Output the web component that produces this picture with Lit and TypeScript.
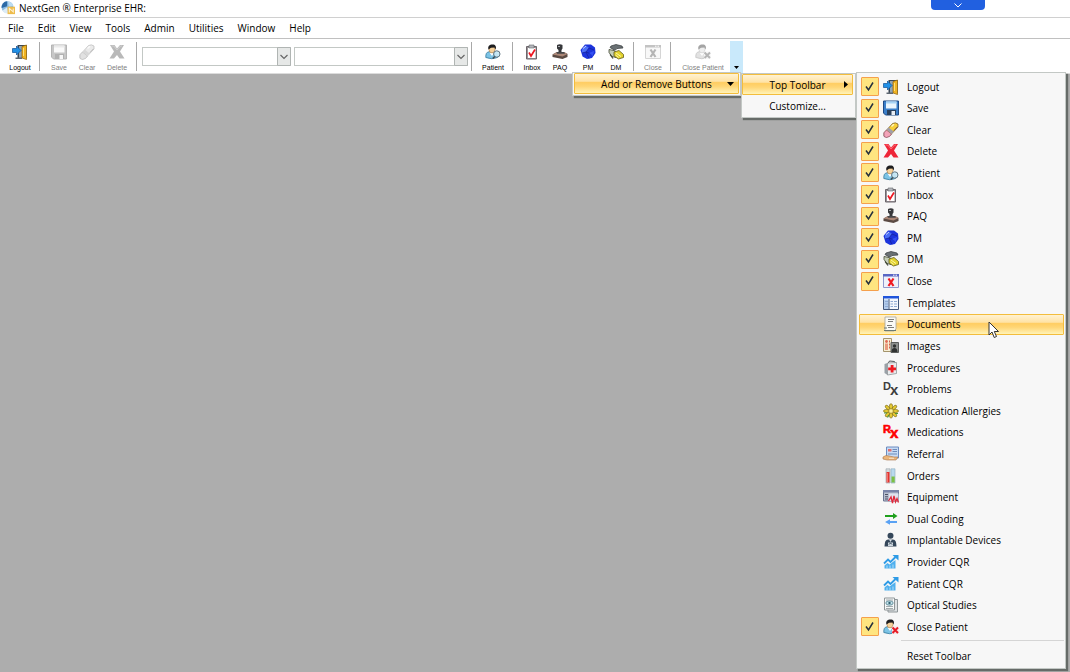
import { LitElement, html, svg, css, nothing } from "lit";
import { customElement, property } from "lit/decorators.js";
import { classMap } from "lit/directives/class-map.js";

const person = svg`
  <path d="M.8 13.500Q.5 8 4 7.800h5.500Q13 9 12.500 13.500 7 16 .8 13.500z" fill="#7cc4e6" stroke="#35789c" stroke-width=".8"/>
  <path d="M4.500 8.500l2.500 3.500 2.500-3.500z" fill="#fff"/>
  <ellipse cx="7" cy="5.500" rx="3" ry="3.400" fill="#f6d29c" stroke="#a8753c" stroke-width=".6"/>
  <path d="M3.500 5.500C2.500 2 4.500.5 7.500.5S11.500 2.500 10.800 5.500L9.500 3.500 6 3.800z" fill="#1d1d1f"/>`;

const chart = svg`
  <path d="M1.500 14.500v-3l3-2.500 2 1.500 6-4.500v8.500z" fill="#4fb0ee"/>
  <path d="M1 9.500L5 5.500l2.500 2.500L12.500 3" fill="none" stroke="#2e9be6" stroke-width="1.800"/>
  <path d="M9.500 1h6v5.500z" fill="#2e9be6"/>
  <path d="M4 14.500v-3M7 14.500v-3M10 14.500v-4" stroke="#c9e8fa" stroke-width=".8"/>`;

const icons: Record<string, unknown> = {
  logout: svg`
    <path d="M5.500 1h9v13h-9z" fill="#3a4754"/>
    <path d="M7 2h4v12H7z" fill="#93a4b2"/>
    <path d="M10 2.500L14.500 1v14.500L10 14z" fill="#f0b321" stroke="#8a5f08" stroke-width=".7"/>
    <path d="M11.500 4v8" stroke="#fbdf7c"/>
    <path d="M3.500 13.500H10V15H3.500z" fill="#5d6670"/>
    <path d="M.5 4.500h4V2L9 6.500 4.500 11V8.500h-4z" fill="#2090e6" stroke="#0b4f96" stroke-width=".7"/>`,
  save: svg`
    <path d="M.5 1h15v14H2.500L.5 13z" fill="#3a7fca" stroke="#1d4a86"/>
    <path d="M3 1.500h10.500v7H3z" fill="#eaf5fd"/>
    <path d="M3 1.500h10.500v2H3z" fill="#a6d3f5"/>
    <path d="M4 10h9v5H4z" fill="#2b415c"/>
    <path d="M8.500 11H12v4H8.500z" fill="#e9eef4"/>`,
  clear: svg`
    <path d="M1 11l8.500-9.500q3-1.500 5.500.5V5L6.500 14q-3 2-5.500 0z" fill="#f7cf38" stroke="#6b5026" stroke-width=".7"/>
    <path d="M1 10.500L3.500 8l5 4-2 2.500q-3.500 2-5.500 0z" fill="#f3a3b8" stroke="#8a4a5e" stroke-width=".7"/>
    <path d="M3.700 7.800l2-2.300 5 4-2.200 2.400z" fill="#a19fa8"/>
    <path d="M8.500 4.500L11 2.200" stroke="#fff6c4" stroke-width="1.300"/>
    <path d="M11 8.500L14.500 4.800" stroke="#7c4a34"/>`,
  delete: svg`
    <path d="M1 1h4.500L8 4.500 11 1h4l-4 6.500 4.500 7h-5L8 11l-3 3.500H.5l4.500-7z" fill="#ee2638"/>
    <path d="M2.500 2h2.300L8 6l3.500-4H13" fill="none" stroke="#ff7f86" stroke-width=".8"/>`,
  patient: svg`${person}
    <circle cx="11.800" cy="10" r="3.200" fill="#c7e8f6" fill-opacity=".95" stroke="#5f7480"/>
    <path d="M9.800 12.500l-2 2" stroke="#3e4a52" stroke-width="1.500"/>`,
  inbox: svg`
    <path d="M2.500 2.500h10v12.500h-10z" fill="#9a9498" stroke="#6c676c"/>
    <path d="M4 4h7.500v10H4z" fill="#fff"/>
    <path d="M5 1h5v3H5z" fill="#b4b6bb" stroke="#66686c" stroke-width=".6"/>
    <path d="M5 8.500l2 3.500L11 5.500" fill="none" stroke="#ee1822" stroke-width="1.700"/>`,
  paq: svg`
    <path d="M5 1q3-1.500 5.500 0v3.500L9.500 6v3h-3V6L5 4.500z" fill="#37383b"/>
    <path d="M6 2.500h2" stroke="#a8aaae"/>
    <path d="M.5 10.500L5 8h7l3.500 2v3L10.500 15 .5 13z" fill="#5a4a43"/>
    <path d="M.5 10.500L5 8h7l3.500 2-5 2.500z" fill="#ab8676"/>
    <path d="M4.500 8h7.500l1 1.800H5z" fill="#47474a"/>`,
  pm: svg`
    <path d="M5 .5h6l4 3 .5 5.500-3.500 5-5 1-4.500-2.500L.5 6z" fill="#1c34dc"/>
    <path d="M2 5l4-3.500 3 2.500-3 4-4 1z" fill="#4b6ff6"/>
    <path d="M6 8l3-4 5 2M6 8l3 6.500M2 9l4-1 8 3" fill="none" stroke="#1422a0" stroke-width=".8"/>
    <path d="M9 9l5-2-1 5z" fill="#3450f4"/>
    <path d="M3 4.500L6 2" stroke="#c9d5ff"/>`,
  dm: svg`
    <path d="M3 2l5-1.500L14 2l1 2-6 .5-2 2-5-3z" fill="#6a7174" stroke="#33383a" stroke-width=".7"/>
    <path d="M1 5.500l5 1L9.500 10 8 13.500l-4-1-3-4z" fill="#c4cdb6" stroke="#3d4330" stroke-width=".8"/>
    <path d="M2 10.500l3 4" stroke="#3d4330" stroke-width="1.200"/>
    <path d="M6 8l5-1.500 4.500 4v3L10.500 15 6 12z" fill="#e3d22d" stroke="#5f5a1c" stroke-width=".8"/>
    <path d="M8 9l5 3.500M7.500 11l3 2.500" stroke="#fbf7a8"/>`,
  close: svg`
    <path d="M.5 1.500h15v13H.5z" fill="#eef0fa" stroke="#8f97cc"/>
    <path d="M0 1h16v2.500H0z" fill="#5866c4"/>
    <path d="M10 2.200h1.500M12.500 2.200H14" stroke="#fff"/>
    <path d="M5.500 5.500l5 7.500M10.500 5.500l-5 7.500" stroke="#f01820" stroke-width="2.200"/>`,
  templates: svg`
    <path d="M.5 1.500h15v13H.5z" fill="#f4f8fd" stroke="#43587c"/>
    <path d="M0 1h16v2.500H0z" fill="#1f55dc"/>
    <path d="M1 4.500h4.500V14H1z" fill="#b3ccec"/>
    <path d="M6 4v10.500" stroke="#43587c"/>
    <path d="M2 6.500h3M2 9h3M2 11.500h3M7.500 6.500H10M7.500 9H10M7.500 11.500H10M11 6.500h3M11 9h3M11 11.500h3" stroke="#8fabd4"/>`,
  documents: svg`
    <path d="M2 1h11v12l-2 2H2z" fill="#fafaf5" stroke="#a4a49e" stroke-width=".8"/>
    <path d="M5 3.500h6M5 5.500h5M4 9.500h5M5 11.500h6" stroke="#6e6e6c" stroke-width=".9"/>
    <path d="M1 12h3M1 14.500h12" stroke="#6c7a72"/>`,
  images: svg`
    <path d="M.5.500h8v13h-8z" fill="#f6efd6" stroke="#a5946c"/>
    <circle cx="3.500" cy="3.500" r="1.400" fill="#e06a54"/>
    <path d="M2 5.500h3V12H2z" fill="#e99a7c"/>
    <path d="M6.500 2.500v9" stroke="#d0604a" stroke-dasharray="2 1"/>
    <path d="M8 4.500h7.500v10H8z" fill="#8d918e" stroke="#5a5d5b"/>
    <circle cx="11.500" cy="8" r="1.700" fill="#2f3231"/>
    <path d="M8.500 14q0-4 3-4t3 4z" fill="#2f3231"/>`,
  procedures: svg`
    <path d="M5 3.500L6.500 1l5 .5 1 2" fill="none" stroke="#505458"/>
    <path d="M1.500 4l3-1v12l-3-2z" fill="#9aa1a7"/>
    <path d="M4.500 3L13.500 2.500v11L4.500 15z" fill="#e9ecee" stroke="#84898d" stroke-width=".7"/>
    <path d="M7.700 5h2.800v2.500H13v2.800h-2.500V12.500H7.700v-2.200H5.200V7.500h2.500z" fill="#ee1a22"/>`,
  problems: svg`
    <text x="0" y="9" font-family="Liberation Sans, sans-serif" font-weight="700" font-size="11" fill="#3d3d3d">D</text>
    <text x="7" y="14" font-family="Liberation Sans, sans-serif" font-weight="700" font-size="15" fill="#3d3d3d">x</text>`,
  allergies: svg`
    <g fill="#e6cb34" stroke="#806c12" stroke-width=".7">
      <ellipse cx="8" cy="3.500" rx="1.600" ry="2.800"/>
      <ellipse cx="3.500" cy="8" rx="3" ry="1.500"/>
      <ellipse cx="12.500" cy="8" rx="3" ry="1.500"/>
      <ellipse cx="8" cy="12.300" rx="1.600" ry="2.800"/>
      <ellipse cx="4.500" cy="4.500" rx="2.700" ry="1.500" transform="rotate(45 4.500 4.500)"/>
      <ellipse cx="11.500" cy="4.500" rx="2.700" ry="1.500" transform="rotate(-45 11.500 4.500)"/>
      <ellipse cx="4.500" cy="11.500" rx="2.700" ry="1.500" transform="rotate(-45 4.500 11.500)"/>
      <ellipse cx="11.500" cy="11.500" rx="2.700" ry="1.500" transform="rotate(45 11.500 11.500)"/>
    </g>
    <path d="M1 10h3M12 10.500h3M6 12l-1.500 2.500" stroke="#4c9834" stroke-width="1.200"/>
    <circle cx="8" cy="8" r="2.200" fill="#fbf09a" stroke="#a3892a" stroke-width=".6"/>`,
  medications: svg`
    <text x="0" y="9" font-family="Liberation Sans, sans-serif" font-weight="700" font-size="11" fill="#f00" stroke="#f00" stroke-width=".6">R</text>
    <text x="7" y="14" font-family="Liberation Sans, sans-serif" font-weight="700" font-size="15" fill="#f00" stroke="#f00" stroke-width=".6">x</text>`,
  referral: svg`
    <path d="M3.500 1h12v11h-12z" fill="#c6dbf5" stroke="#6c8cc0"/>
    <path d="M5 3h3.500v2.500H5z" fill="#e07070"/>
    <path d="M9.500 3.500H14M9.500 5.500H14M5 8h9" stroke="#6f8cba"/>
    <path d="M0 11q3-2.500 6-1l5 1h4l-2 3H4l-4-1z" fill="#ecb67a" stroke="#a8744a" stroke-width=".6"/>
    <path d="M6 12.300h5" stroke="#fbe3c4"/>`,
  orders: svg`
    <path d="M3 .8h4V15H3z" fill="#d4dade" stroke="#98a2a9" stroke-width=".6"/>
    <path d="M3.500 4h3v10.500h-3z" fill="#e5332f"/>
    <path d="M8 .8h4V15H8z" fill="#b9d9ee" stroke="#8caabe" stroke-width=".6"/>
    <path d="M8.500 8.500h3.200v6H8.500z" fill="#7cc044"/>
    <path d="M4.500 5v9" stroke="#ff9488" stroke-width=".7"/>`,
  equipment: svg`
    <path d="M.5 1.500h15v10.500H.5z" fill="#b9bfd0" stroke="#697390"/>
    <path d="M0 1h16v2.500H0z" fill="#7a84a8"/>
    <path d="M2 5.500h3M2 7.800h3M2 10h3" stroke="#4b5163"/>
    <path d="M6 4.500h9.500V12H6z" fill="#dfe2ef"/>
    <path d="M5.500 12l2.500-4 1.500 6L11 7l1.500 6L14 9.500l1.500 4" fill="none" stroke="#e0283a" stroke-width="1.300"/>`,
  dual: svg`
    <path d="M2 4h8V2l4.500 3L10 8V6H2z" fill="#1fa01c"/>
    <path d="M14 10H7V8.300L2 11l5 2.800V12h7z" fill="#5aa2f4"/>`,
  implant: svg`
    <circle cx="7.500" cy="3.800" r="3" fill="#35475a"/>
    <path d="M1.500 14.500Q1.500 7.500 5 7.500h5q3.500 0 3.500 7z" fill="#35475a"/>
    <path d="M6 7.500h3L7.500 10z" fill="#dfe6ec"/>
    <path d="M5 10.500h5v3.500H5z" fill="#cfd8df"/>
    <path d="M6 12.500l1.500-1.500 1.500 1.500" fill="none" stroke="#35475a"/>`,
  chart,
  optical: svg`
    <path d="M5 2.500h9.500V15H5z" fill="#dde1e3" stroke="#8f9698"/>
    <path d="M1.500 1h10v12h-10z" fill="#f7f9f9" stroke="#8f9698"/>
    <ellipse cx="6.500" cy="6" rx="3.700" ry="2.200" fill="#c4e2ea" stroke="#4d7c8c" stroke-width=".8"/>
    <circle cx="6.500" cy="6" r="1.200" fill="#2f6070"/>
    <path d="M3 3h7M3 9.500h7M3 11.500h7" stroke="#a3abad"/>`,
  closePatient: svg`${person}
    <path d="M9 7.500h6.500V15H9z" fill="#fbe4e4"/>
    <path d="M9.500 8.500l5.500 5.500M15 8.500l-5.500 5.500" stroke="#e61c26" stroke-width="2"/>`,
  app: svg`
    <circle cx="7.500" cy="7" r="6.800" fill="#8cbce2"/>
    <path d="M.8 8A6.500 6.500 0 0 1 7 .4V6z" fill="#2c6aa6"/>
    <path d="M8 .5a7 7 0 0 1 6 5L9 6.500z" fill="#bcdcf2"/>
    <path d="M1.500 11q3 4 7 3L7 7z" fill="#dcebf6"/>
    <path d="M7.500 6.500H16V15H7.500z" fill="#eebc4c"/>
    <path d="M9.500 13V8.500l4.500 4V8.500" fill="none" stroke="#fdf3d8" stroke-width="1.200"/>`,
};

@customElement("ui-icon")
class UiIcon extends LitElement {
  static styles = css`
    :host { display: block; width: 16px; height: 16px; flex: none; }
    svg { display: block; width: 100%; height: 100%; overflow: visible; }
  `;
  @property() name = "";
  render() {
    return html`<svg viewBox="0 0 16 16" aria-hidden="true">${icons[this.name] ?? nothing}</svg>`;
  }
}

interface Entry { label: string; icon: string; on?: boolean; hot?: boolean; }

const entries: Entry[] = [
  { label: "Logout", icon: "logout", on: true },
  { label: "Save", icon: "save", on: true },
  { label: "Clear", icon: "clear", on: true },
  { label: "Delete", icon: "delete", on: true },
  { label: "Patient", icon: "patient", on: true },
  { label: "Inbox", icon: "inbox", on: true },
  { label: "PAQ", icon: "paq", on: true },
  { label: "PM", icon: "pm", on: true },
  { label: "DM", icon: "dm", on: true },
  { label: "Close", icon: "close", on: true },
  { label: "Templates", icon: "templates" },
  { label: "Documents", icon: "documents", hot: true },
  { label: "Images", icon: "images" },
  { label: "Procedures", icon: "procedures" },
  { label: "Problems", icon: "problems" },
  { label: "Medication Allergies", icon: "allergies" },
  { label: "Medications", icon: "medications" },
  { label: "Referral", icon: "referral" },
  { label: "Orders", icon: "orders" },
  { label: "Equipment", icon: "equipment" },
  { label: "Dual Coding", icon: "dual" },
  { label: "Implantable Devices", icon: "implant" },
  { label: "Provider CQR", icon: "chart" },
  { label: "Patient CQR", icon: "chart" },
  { label: "Optical Studies", icon: "optical" },
  { label: "Close Patient", icon: "closePatient", on: true },
];

@customElement("app-root")
class AppRoot extends LitElement {
  static styles = css`
    :host {
      display: flex;
      flex-direction: column;
      min-height: 100vh;
      background: #fff;
      color: #000;
      font: 10px/14px "Open Sans", "Noto Sans", sans-serif;
    }
    * { box-sizing: border-box; }
    button, select { font: inherit; color: inherit; margin: 0; padding: 0; border: 0; background: none; border-radius: 0; }
    .titlebar {
      position: relative;
      display: flex;
      align-items: center;
      gap: 4px;
      height: 18px;
      padding: 0 1px 2px;
      border-bottom: 1px solid #d0d0d0;
    }
    .titlebar ui-icon { width: 14px; height: 14px; }
    .titlebar h1 { margin: 0; font: inherit; }
    .tab {
      position: absolute;
      top: 0;
      right: 85px;
      width: 54px;
      height: 10px;
      display: grid;
      place-items: center;
      background: #2160e0;
      border-radius: 0 0 4px 4px;
    }
    .menubar {
      display: flex;
      align-items: center;
      gap: 14px;
      height: 21px;
      padding: 0 8px;
      border-bottom: 1px solid #c0c0c0;
    }
    .toolbar {
      display: flex;
      align-items: stretch;
      height: 35px;
      padding: 2px 4px 0;
      border-bottom: 1px solid #dcdcdc;
    }
    .tool {
      width: 28px;
      display: flex;
      flex-direction: column;
      align-items: center;
      gap: 4px;
      padding-top: 3px;
      font: 7px/8px "Liberation Sans", sans-serif;
      white-space: nowrap;
      color: #000;
    }
    .tool.mid { width: 32px; }
    .tool.wide { width: 54px; }
    .tool:disabled { color: #808080; }
    .tool:disabled ui-icon { filter: grayscale(1); opacity: 0.4; }
    .sep { width: 1px; margin: 1px 5px 2px 3px; background: #a8a8a8; }
    .combo { display: grid; width: 149px; height: 19px; margin: 6px 3px 0 0; }
    .combo.long { width: 174px; margin-right: 0; }
    .combo select {
      grid-area: 1 / 1;
      appearance: none;
      width: 100%;
      height: 100%;
      border: 1px solid #c3c8c5;
      background: #fff;
    }
    .combo svg { grid-area: 1 / 1; justify-self: end; width: 14px; height: 19px; pointer-events: none; }
    .drop {
      width: 13px;
      display: grid;
      place-items: end center;
      padding-bottom: 4px;
      background: #c9e9fb;
    }
    .workspace { position: relative; flex: 1; background: #adadad; }
    .popups { position: absolute; top: -2px; left: 572px; display: flex; align-items: flex-start; }
    .menu {
      background: #f7f7f7;
      border: 1px solid #c3c8c5;
      box-shadow: 2px 2px 1px #666b68;
    }
    .item {
      display: flex;
      align-items: center;
      justify-content: center;
      position: relative;
      width: 100%;
      height: 21px;
      border: 1px solid transparent;
      border-radius: 1px;
      white-space: nowrap;
    }
    .item svg { position: absolute; right: 4px; }
    .first { width: 169px; padding: 0 1px 1px; }
    .second { width: 115px; margin-top: 1px; padding: 0 2px 1px 0; }
    .third { width: 210px; padding: 1px; }
    .list { display: grid; grid-auto-rows: 1fr; height: 562px; margin: 2px 0 0; padding: 0; list-style: none; }
    .row {
      display: grid;
      grid-template-columns: 18px 16px 1fr;
      column-gap: 4px;
      align-items: center;
      height: 21px;
      margin-left: 1px;
      padding-left: 1px;
      border: 1px solid transparent;
      border-radius: 1px;
      white-space: nowrap;
    }
    .row span { padding-left: 4px; }
    .hot {
      border-color: #f3bd3c;
      background: linear-gradient(#fff2d2 0%, #ffe3a6 38%, #ffcd62 45%, #ffd676 65%, #fff3b8 100%);
    }
    .check {
      appearance: none;
      width: 18px;
      height: 19px;
      margin: 0;
      border-radius: 1px;
    }
    .check:checked { background: #ffe580; border: 1px solid #f5a04c; }
    .tick { position: relative; display: grid; place-items: center; height: 19px; }
    .tick > * { grid-area: 1 / 1; }
    .tick svg { pointer-events: none; z-index: 1; }
    .rule { border: 0; border-top: 1px solid #d5d5d5; margin: 2px 0 3px 43px; }
    .reset { display: block; width: 100%; height: 23px; padding-left: 49px; text-align: left; }
    .cursor { position: absolute; left: 988px; top: 247px; pointer-events: none; }
  `;

  private tool(label: string, icon: string, size = "", disabled = false) {
    return html`<button class="tool ${size}" ?disabled=${disabled}>
      <ui-icon name=${icon}></ui-icon>${label}
    </button>`;
  }

  private combo(label: string, long = false) {
    return html`<div class=${classMap({ combo: true, long })}>
      <select aria-label=${label}><option></option></select>
      <svg viewBox="0 0 14 19" aria-hidden="true">
        <path d="M.5.5h13v18H.5z" fill="#e6e8e7" stroke="#b0b5b3"/>
        <path d="M3.500 8l3.500 3.500L10.500 8" fill="none" stroke="#666" stroke-width="1.200"/>
      </svg>
    </div>`;
  }

  private row(e: Entry) {
    return html`<li>
      <label class=${classMap({ row: true, hot: !!e.hot })}>
        <div class="tick">
          <input class="check" type="checkbox" .checked=${!!e.on}>
          ${e.on
            ? html`<svg width="12" height="12" viewBox="0 0 12 12" aria-hidden="true">
                <path d="M2 5.500L4.500 9 9 1.500" fill="none" stroke="#26303c" stroke-width="1.500"/>
              </svg>`
            : nothing}
        </div>
        <ui-icon name=${e.icon}></ui-icon>
        <span>${e.label}</span>
      </label>
    </li>`;
  }

  render() {
    const menus = ["File", "Edit", "View", "Tools", "Admin", "Utilities", "Window", "Help"];
    const sep = html`<div class="sep"></div>`;
    return html`
      <header class="titlebar">
        <ui-icon name="app"></ui-icon>
        <h1>NextGen ® Enterprise EHR:</h1>
        <button class="tab" aria-label="Expand">
          <svg width="8" height="5" viewBox="0 0 8 5"><path d="M.5.500L4 4 7.500.500" fill="none" stroke="#fff"/></svg>
        </button>
      </header>
      <nav class="menubar">${menus.map((m) => html`<button>${m}</button>`)}</nav>
      <div class="toolbar">
        ${this.tool("Logout", "logout", "mid")} ${sep}
        ${this.tool("Save", "save", "", true)}
        ${this.tool("Clear", "clear", "", true)}
        ${this.tool("Delete", "delete", "mid", true)} ${sep}
        ${this.combo("Location")} ${this.combo("Provider", true)} ${sep}
        ${this.tool("Patient", "patient", "mid")} ${sep}
        ${this.tool("Inbox", "inbox")} ${this.tool("PAQ", "paq")}
        ${this.tool("PM", "pm")} ${this.tool("DM", "dm")} ${sep}
        ${this.tool("Close", "close", "", true)} ${sep}
        ${this.tool("Close Patient", "closePatient", "wide", true)}
        <button class="drop" aria-label="Toolbar options">
          <svg width="5" height="3" viewBox="0 0 5 3"><path d="M0 0h5L2.500 3z"/></svg>
        </button>
      </div>
      <main class="workspace">
        <div class="popups">
          <div class="menu first">
            <button class="item hot">Add or Remove Buttons
              <svg width="7" height="4" viewBox="0 0 7 4"><path d="M0 0h7L3.500 4z"/></svg>
            </button>
          </div>
          <div class="menu second">
            <button class="item hot">Top Toolbar
              <svg width="4" height="7" viewBox="0 0 4 7"><path d="M0 0v7l4-3.500z"/></svg>
            </button>
            <button class="item">Customize...</button>
          </div>
          <div class="menu third">
            <ul class="list">${entries.map((e) => this.row(e))}</ul>
            <hr class="rule">
            <button class="reset">Reset Toolbar</button>
          </div>
        </div>
        <svg class="cursor" width="12" height="18" viewBox="0 0 12 18" aria-hidden="true">
          <path d="M1 1v13l3-3 2.200 5.500 2.300-1L6.300 10.500H10.500z" fill="#fff" stroke="#333"/>
        </svg>
      </main>
    `;
  }
}
